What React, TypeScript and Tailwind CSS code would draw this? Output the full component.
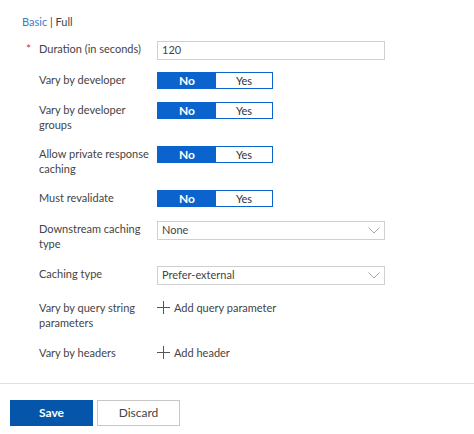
import React from 'react'

const font = { fontFamily: 'Lato, "Noto Sans", sans-serif' }

const Toggle = () => (
  <div className="flex h-[17px] w-[116px] border border-[#0b63ce] text-[11px] leading-[15px]">
    <div className="flex w-[58px] items-center justify-center bg-[#0b63ce] text-[12px] font-bold text-white">No</div>
    <div className="flex flex-1 items-center justify-center bg-white text-[#333]">Yes</div>
  </div>
)

const Select = ({ value }: { value: string }) => (
  <div className="flex h-[19px] w-[228px] items-center justify-between border border-[#d0d0d0] bg-white pl-[4px] pr-[4px] text-[11px] text-[#444]">
    <span>{value}</span>
    <svg width="12" height="7" viewBox="0 0 12 7" fill="none">
      <path d="M0.5 0.5 L6 6 L11.5 0.5" stroke="#a8a8a8" strokeWidth="1" />
    </svg>
  </div>
)

const AddLink = ({ text }: { text: string }) => (
  <div className="flex items-center gap-[4px] text-[11px] leading-[15px] text-[#444]">
    <svg width="13" height="13" viewBox="0 0 13 13">
      <path d="M6.5 0 V13 M0 6.5 H13" stroke="#555" strokeWidth="1" />
    </svg>
    <span>{text}</span>
  </div>
)

const Row = ({ label, required, children, className }: { label: string; required?: boolean; children: React.ReactNode; className?: string }) => (
  <div className={`flex items-start ${className ?? ''}`}>
    <div className="w-[17px] pl-[4px] text-[12px] leading-[15px] text-[#d13438]">{required ? '*' : ''}</div>
    <div className="w-[118px] pr-[4px] text-[11px] leading-[15px] text-[#444]">{label}</div>
    <div>{children}</div>
  </div>
)

export default function App() {
  return (
    <div className="h-[434px] w-[474px] bg-white" style={font}>
      <div className="px-[22px] pt-[14px] text-[11px] leading-[15px] text-[#444]">
        <span className="text-[#3a7bc8]">Basic</span> | Full
      </div>

      <div className="flex flex-col pl-[22px] pt-[12px]">
        <Row label="Duration (in seconds)" required>
          <div className="flex h-[19px] w-[228px] items-center border border-[#d0d0d0] bg-white pl-[4px] text-[11px] text-[#444]">120</div>
        </Row>
        <Row label="Vary by developer" className="mt-[12px]">
          <Toggle />
        </Row>
        <Row label="Vary by developer groups" className="mt-[13px]">
          <Toggle />
        </Row>
        <Row label="Allow private response caching" className="mt-[14px]">
          <Toggle />
        </Row>
        <Row label="Must revalidate" className="mt-[14px]">
          <Toggle />
        </Row>
        <Row label="Downstream caching type" className="mt-[14px]">
          <Select value="None" />
        </Row>
        <Row label="Caching type" className="mt-[15px]">
          <Select value="Prefer-external" />
        </Row>
        <Row label="Vary by query string parameters" className="mt-[15px]">
          <AddLink text="Add query parameter" />
        </Row>
        <Row label="Vary by headers" className="mt-[15px]">
          <AddLink text="Add header" />
        </Row>
      </div>

      <div className="mt-[23px] border-t border-[#e1e1e1]" />

      <div className="flex gap-[4px] pl-[10px] pt-[16px]">
        <button className="h-[26px] w-[83px] bg-[#0555ab] text-[12px] font-bold text-white">Save</button>
        <button className="h-[26px] w-[83px] border border-[#c8c8c8] bg-white text-[12px] text-[#444]">Discard</button>
      </div>
    </div>
  )
}
